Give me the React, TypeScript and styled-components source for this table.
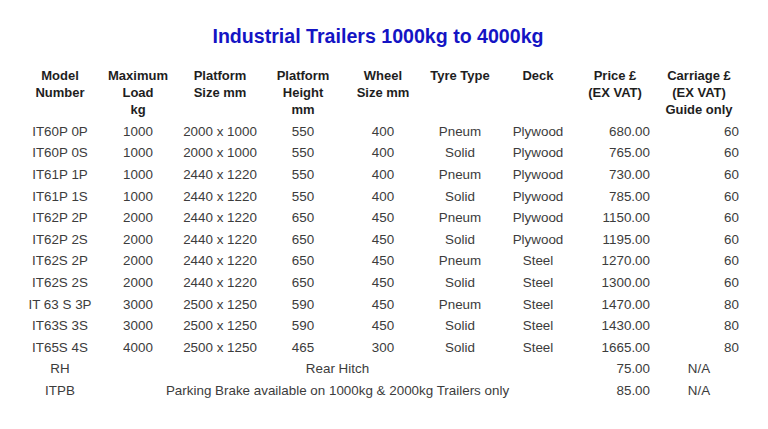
// Import Dependencies
import styled, { createGlobalStyle } from "styled-components";
import type { FunctionComponent } from "react";

// Define Types
type Trailer = {
    model: string;
    load: string;
    size: string;
    height: string;
    wheel: string;
    tyre: string;
    deck: string;
    price: string;
    carriage: string;
};

const trailers: Trailer[] = [
    { model: "IT60P 0P", load: "1000", size: "2000 x 1000", height: "550", wheel: "400", tyre: "Pneum", deck: "Plywood", price: "680.00", carriage: "60" },
    { model: "IT60P 0S", load: "1000", size: "2000 x 1000", height: "550", wheel: "400", tyre: "Solid", deck: "Plywood", price: "765.00", carriage: "60" },
    { model: "IT61P 1P", load: "1000", size: "2440 x 1220", height: "550", wheel: "400", tyre: "Pneum", deck: "Plywood", price: "730.00", carriage: "60" },
    { model: "IT61P 1S", load: "1000", size: "2440 x 1220", height: "550", wheel: "400", tyre: "Solid", deck: "Plywood", price: "785.00", carriage: "60" },
    { model: "IT62P 2P", load: "2000", size: "2440 x 1220", height: "650", wheel: "450", tyre: "Pneum", deck: "Plywood", price: "1150.00", carriage: "60" },
    { model: "IT62P 2S", load: "2000", size: "2440 x 1220", height: "650", wheel: "450", tyre: "Solid", deck: "Plywood", price: "1195.00", carriage: "60" },
    { model: "IT62S 2P", load: "2000", size: "2440 x 1220", height: "650", wheel: "450", tyre: "Pneum", deck: "Steel", price: "1270.00", carriage: "60" },
    { model: "IT62S 2S", load: "2000", size: "2440 x 1220", height: "650", wheel: "450", tyre: "Solid", deck: "Steel", price: "1300.00", carriage: "60" },
    { model: "IT 63 S 3P", load: "3000", size: "2500 x 1250", height: "590", wheel: "450", tyre: "Pneum", deck: "Steel", price: "1470.00", carriage: "80" },
    { model: "IT63S 3S", load: "3000", size: "2500 x 1250", height: "590", wheel: "450", tyre: "Solid", deck: "Steel", price: "1430.00", carriage: "80" },
    { model: "IT65S 4S", load: "4000", size: "2500 x 1250", height: "465", wheel: "300", tyre: "Solid", deck: "Steel", price: "1665.00", carriage: "80" },
];

const extras = [
    { model: "RH", text: "Rear Hitch", price: "75.00" },
    { model: "ITPB", text: "Parking Brake available on 1000kg & 2000kg Trailers only", price: "85.00" },
];

const GlobalStyle = createGlobalStyle`
    html, body {
        margin: 0;
        background: #ffffff;
        font-family: "Liberation Sans", Arial, sans-serif;
    }
`;

const Page = styled.main`
    width: 768px;
    height: 429px;
    overflow: hidden;
    padding-top: 24px;
    box-sizing: border-box;
`;

const Title = styled.h1`
    margin: 0 0 19px;
    padding-right: 12px;
    font-size: 19.6px;
    line-height: 24px;
    font-weight: bold;
    color: #1414c4;
    text-align: center;
`;

const PriceTable = styled.table`
    margin-left: 20px;
    width: 728px;
    table-layout: fixed;
    border-collapse: collapse;
    font-size: 13.4px;
`;

const HeadCell = styled.th<{ $width: number }>`
    width: ${(p) => p.$width}px;
    padding: 0 0 3px;
    font-size: 13px;
    line-height: 17px;
    font-weight: bold;
    color: #1e1e1e;
    text-align: center;
    vertical-align: top;
`;

const Cell = styled.td<{ $align?: "left" | "center" | "right"; $pad?: number }>`
    height: 21.6px;
    padding: 0 ${(p) => p.$pad ?? 0}px 0 0;
    line-height: 16px;
    color: #3c3c3c;
    text-align: ${(p) => p.$align ?? "center"};
    white-space: nowrap;
`;

const columns = [
    { label: ["Model", "Number"], width: 80 },
    { label: ["Maximum", "Load", "kg"], width: 76 },
    { label: ["Platform", "Size mm"], width: 88 },
    { label: ["Platform", "Height", "mm"], width: 78 },
    { label: ["Wheel", "Size mm"], width: 82 },
    { label: ["Tyre Type"], width: 72 },
    { label: ["Deck"], width: 84 },
    { label: ["Price £", "(EX VAT)"], width: 70 },
    { label: ["Carriage £", "(EX VAT)", "Guide only"], width: 98 },
];

// Define Page
const App: FunctionComponent = () => {
    return (
        <>
            <GlobalStyle />
            <Page>
                <Title>Industrial Trailers 1000kg to 4000kg</Title>
                <PriceTable>
                    <thead>
                        <tr>
                            {columns.map((c, i) => (
                                <HeadCell key={i} $width={c.width}>
                                    {c.label.map((l, j) => (
                                        <div key={j}>{l}</div>
                                    ))}
                                </HeadCell>
                            ))}
                        </tr>
                    </thead>
                    <tbody>
                        {trailers.map((t) => (
                            <tr key={t.model}>
                                <Cell>{t.model}</Cell>
                                <Cell>{t.load}</Cell>
                                <Cell>{t.size}</Cell>
                                <Cell>{t.height}</Cell>
                                <Cell>{t.wheel}</Cell>
                                <Cell>{t.tyre}</Cell>
                                <Cell>{t.deck}</Cell>
                                <Cell $align="right">{t.price}</Cell>
                                <Cell $align="right" $pad={9}>
                                    {t.carriage}
                                </Cell>
                            </tr>
                        ))}
                        {extras.map((e) => (
                            <tr key={e.model}>
                                <Cell>{e.model}</Cell>
                                <Cell colSpan={6} $pad={5}>
                                    {e.text}
                                </Cell>
                                <Cell $align="right">{e.price}</Cell>
                                <Cell>N/A</Cell>
                            </tr>
                        ))}
                    </tbody>
                </PriceTable>
            </Page>
        </>
    );
};

// Export Page
export default App;
